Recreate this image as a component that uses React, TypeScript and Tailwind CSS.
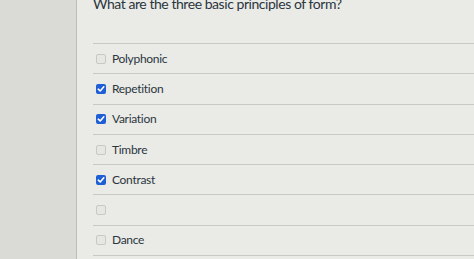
import React from "react";

const options = [
  { label: "Polyphonic", checked: false },
  { label: "Repetition", checked: true },
  { label: "Variation", checked: true },
  { label: "Timbre", checked: false },
  { label: "Contrast", checked: true },
  { label: "", checked: false },
  { label: "Dance", checked: false },
];

function Box({ checked }: { checked: boolean }) {
  if (checked) {
    return (
      <span className="w-[10px] h-[10px] rounded-[2px] bg-[#1f5fd6] flex items-center justify-center shrink-0">
        <svg width="8" height="8" viewBox="0 0 8 8">
          <path d="M1.3 4.2 L3.2 6 L6.8 1.8" stroke="white" strokeWidth="1.6" fill="none" strokeLinecap="round" strokeLinejoin="round" />
        </svg>
      </span>
    );
  }
  return <span className="w-[10px] h-[10px] rounded-[2px] border border-[#c8c8c4] bg-[#e6e6e3] shrink-0" />;
}

export default function App() {
  return (
    <div className="w-[474px] h-[259px] overflow-hidden flex bg-[#eaeae6]" style={{ fontFamily: "Lato, 'Open Sans', sans-serif" }}>
      <div className="w-[77px] shrink-0 bg-[#dadad6] border-r border-[#bcbcb8]" />
      <div className="flex-1 flex flex-col pl-[16px]">
        <div className="h-[43px]">
          <div className="text-[14px] leading-[16px] tracking-[-0.45px] text-[#2a3640] mt-[-4px] whitespace-nowrap">What are the three basic principles of form?</div>
        </div>
        {options.map((o, i) => (
          <div key={i} className="h-[30.3px] border-t border-[#c8c8c4] flex items-center gap-[6px] pl-[3px] text-[12px] tracking-[-0.3px] text-[#2a3640]">
            <Box checked={o.checked} />
            <span>{o.label}</span>
          </div>
        ))}
        <div className="border-t border-[#c8c8c4]" />
      </div>
    </div>
  );
}
